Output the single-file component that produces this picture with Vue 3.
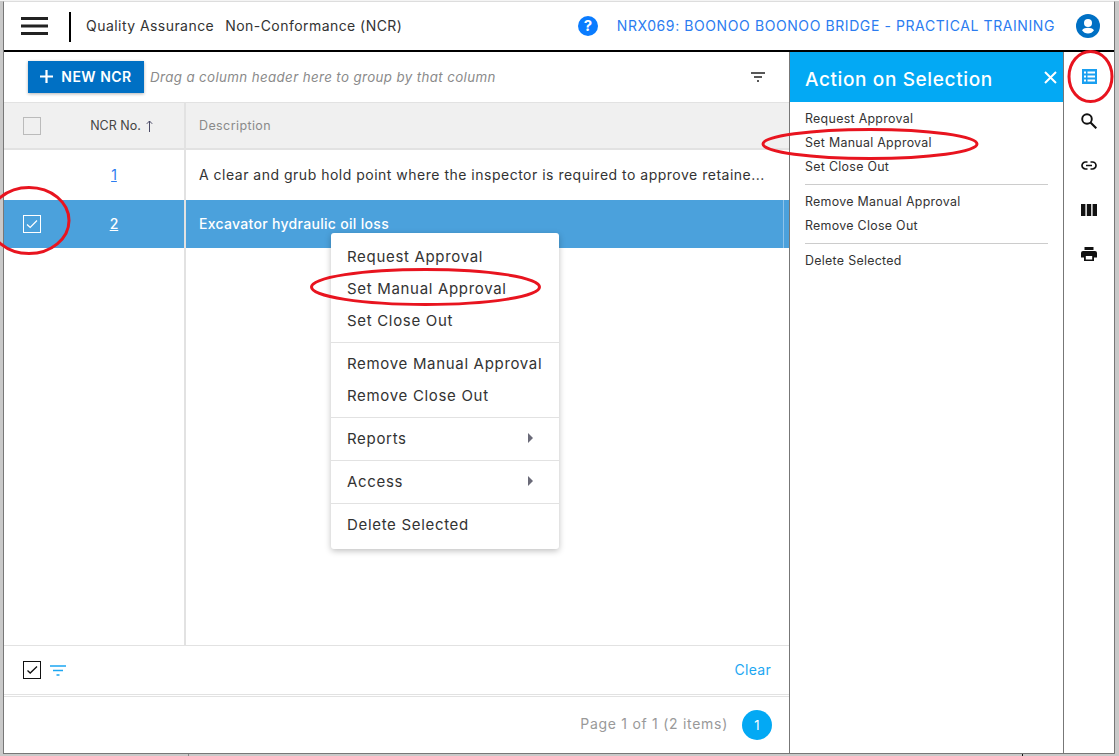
<template>
	<div class="screen">
		<div class="window">
			<header class="topbar">
				<svg class="burger" width="27" height="18" viewBox="0 0 27 18">
					<rect y="0" width="27" height="3" fill="#222" />
					<rect y="7.500" width="27" height="3" fill="#222" />
					<rect y="15" width="27" height="3" fill="#222" />
				</svg>
				<span class="bar-divider"></span>
				<span class="crumb">Quality Assurance</span>
				<span class="crumb">Non-Conformance (NCR)</span>
				<span class="spacer"></span>
				<svg class="help" width="20" height="20" viewBox="0 0 20 20">
					<circle cx="10" cy="10" r="10" fill="#0a7cff" />
					<text x="10" y="15" text-anchor="middle" class="help-mark">?</text>
				</svg>
				<span class="project">NRX069: BOONOO BOONOO BRIDGE - PRACTICAL TRAINING</span>
				<svg class="avatar" width="24" height="24" viewBox="0 0 24 24">
					<circle cx="12" cy="12" r="12" fill="#0070c4" />
					<circle cx="12" cy="9" r="4" fill="#fff" />
					<path d="M6 16.200c1.300-1.700 3.700-2.400 6-2.400s4.700.7 6 2.400c-1.300 2-3.500 3.300-6 3.300s-4.700-1.300-6-3.300z" fill="#fff" />
				</svg>
			</header>

			<div class="body">
				<main class="grid-area">
					<div class="group-bar">
						<button class="new-btn">
							<svg width="13" height="13" viewBox="0 0 13 13">
								<path d="M6.500 0v13M0 6.500h13" stroke="#fff" stroke-width="2.200" />
							</svg>
							NEW NCR
						</button>
						<span class="group-hint">Drag a column header here to group by that column</span>
						<svg class="sort-icon" width="14" height="10" viewBox="0 0 14 10">
							<path d="M0 1h14M3 5h8M6 9h2" stroke="#222" stroke-width="1.500" />
						</svg>
					</div>

					<div class="grid">
						<div class="row head">
							<div class="cell-no">
								<span class="check"></span>
								<span class="no-label">NCR No.
									<svg class="arrow" width="7" height="12" viewBox="0 0 7 12">
										<path d="M3.500 12V1M.8 3.800L3.500 1l2.700 2.800" fill="none" stroke="#4a4a66" stroke-width="1" />
									</svg>
								</span>
							</div>
							<div class="cell-desc">Description</div>
						</div>
						<div v-for="row in rows" :key="row.no" class="row" :class="{ selected: row.selected }">
							<div class="cell-no">
								<span v-if="row.selected" class="check on">
									<svg width="14" height="14" viewBox="0 0 14 14">
										<path d="M2 7.500l3.200 3L12 3.500" fill="none" stroke="#fff" stroke-width="1.200" />
									</svg>
								</span>
								<a class="no-link">{{ row.no }}</a>
							</div>
							<div class="cell-desc body-text">{{ row.text }}</div>
							<span v-if="row.selected" class="row-stripe"></span>
						</div>
						<div class="row filler">
							<div class="cell-no"></div>
							<div class="cell-desc"></div>
						</div>
					</div>

					<div class="filter-bar">
						<span class="check dark">
							<svg width="14" height="14" viewBox="0 0 14 14">
								<path d="M2.500 7.500l2.700 2.500L12 3.500" fill="none" stroke="#111" stroke-width="1.300" />
							</svg>
						</span>
						<svg width="16" height="11" viewBox="0 0 16 11">
							<path d="M0 1h16M3 5.500h10M6.500 10h3" stroke="#1da7f2" stroke-width="1.500" />
						</svg>
						<span class="spacer"></span>
						<a class="clear">Clear</a>
					</div>

					<div class="pager">
						<span class="page-info">Page 1 of 1 (2 items)</span>
						<span class="page-dot">1</span>
					</div>
				</main>

				<aside class="panel">
					<div class="panel-head">
						<span class="panel-title">Action on Selection</span>
						<svg width="13" height="13" viewBox="0 0 13 13">
							<path d="M1 1l11 11M12 1L1 12" stroke="#fff" stroke-width="2" />
						</svg>
					</div>
					<div class="panel-list">
						<template v-for="(group, i) in panelGroups" :key="i">
							<hr v-if="i > 0" />
							<div v-for="item in group" :key="item" class="panel-item">{{ item }}</div>
						</template>
					</div>
				</aside>

				<nav class="rail">
					<span class="rail-slot">
						<svg width="15" height="15" viewBox="0 0 15 15">
							<rect width="15" height="15" fill="#1a9ff0" />
							<path d="M2 3.500h2M5.500 3.500h7.500M2 7.500h2M5.500 7.500h7.500M2 11.500h2M5.500 11.500h7.500" stroke="#fff" stroke-width="1.800" />
						</svg>
					</span>
					<span class="rail-slot">
						<svg width="16" height="16" viewBox="0 0 16 16">
							<circle cx="6" cy="6" r="4.800" fill="none" stroke="#111" stroke-width="1.900" />
							<path d="M9.500 9.500L15.300 15.300" stroke="#111" stroke-width="2.100" />
						</svg>
					</span>
					<span class="rail-slot">
						<svg width="16" height="9" viewBox="0 0 16 9">
							<path d="M6.500 1H4.500a3.500 3.500 0 0 0 0 7h2M9.500 1h2a3.500 3.500 0 0 1 0 7h-2M5 4.500h6" fill="none" stroke="#111" stroke-width="1.700" />
						</svg>
					</span>
					<span class="rail-slot">
						<svg width="16" height="12" viewBox="0 0 16 12">
							<path d="M0 0h4.400v12H0zM5.800 0h4.400v12H5.800zM11.600 0H16v12h-4.400z" fill="#111" />
						</svg>
					</span>
					<span class="rail-slot">
						<svg width="16" height="14" viewBox="0 0 16 14">
							<path d="M3.500 0h9v3h-9z" fill="#111" />
							<path d="M2 4h12a2 2 0 0 1 2 2v4.500h-3V14H3v-3.500H0V6a2 2 0 0 1 2-2z" fill="#111" />
							<path d="M4.800 9h6.400v3.500H4.800z" fill="#fff" />
						</svg>
					</span>
				</nav>

				<div class="context-menu">
					<template v-for="(group, i) in menuGroups" :key="i">
						<hr v-if="i > 0" />
						<div v-for="item in group" :key="item.label" class="menu-item">
							<span>{{ item.label }}</span>
							<i v-if="item.sub" class="caret"></i>
						</div>
					</template>
				</div>
			</div>
		</div>

		<svg class="marks" width="1119" height="756" viewBox="0 0 1119 756">
			<g fill="none" stroke="#e8141f" stroke-width="3">
				<ellipse cx="29" cy="220.500" rx="40" ry="33" />
				<ellipse cx="425.500" cy="287" rx="114" ry="17.500" />
				<ellipse cx="870" cy="144" rx="107" ry="14.500" />
				<ellipse cx="1090.500" cy="76.500" rx="21.500" ry="25" />
			</g>
			<path d="M1022.500 754v2" stroke="#111" />
			<path d="M188.500 754v2" stroke="#888" />
		</svg>
	</div>
</template>

<script setup>
	const rows = [{
		no: 1,
		text: 'A clear and grub hold point where the inspector is required to approve retaine...',
		selected: false
	}, {
		no: 2,
		text: 'Excavator hydraulic oil loss',
		selected: true
	}]
	const panelGroups = [
		['Request Approval', 'Set Manual Approval', 'Set Close Out'],
		['Remove Manual Approval', 'Remove Close Out'],
		['Delete Selected']
	]
	const menuGroups = [
		[{ label: 'Request Approval' }, { label: 'Set Manual Approval' }, { label: 'Set Close Out' }],
		[{ label: 'Remove Manual Approval' }, { label: 'Remove Close Out' }],
		[{ label: 'Reports', sub: true }],
		[{ label: 'Access', sub: true }],
		[{ label: 'Delete Selected' }]
	]
</script>

<style>
	html,
	body {
		margin: 0;
		background: #ccc;
	}
</style>

<style scoped>
	.screen {
		position: relative;
		width: 1119px;
		height: 756px;
		overflow: hidden;
		padding: 0 4px 2px 3px;
		box-sizing: border-box;
		background: #c9c9c9;
		border-top: 1px solid #f4f4f4;
		font-family: Inter, "Open Sans", "Liberation Sans", sans-serif;
		color: #2b2b33;
	}

	.window {
		position: relative;
		height: 100%;
		box-sizing: border-box;
		display: flex;
		flex-direction: column;
		background: #fff;
		border-left: 1px solid #777;
		border-bottom: 1px solid #777;
		border-right: 1px solid #777;
		border-top: 1px solid #ddd;
	}

	.topbar {
		height: 50px;
		display: flex;
		align-items: center;
		border-bottom: 2px solid #000;
		box-sizing: border-box;
		flex: none;
		font-size: 14px;
	}

	.burger {
		margin-left: 17px;
	}

	.bar-divider {
		width: 2px;
		height: 30px;
		background: #000;
		margin: 2px 15px 0 21px;
	}

	.crumb {
		margin: 0 11px 2px 0;
		letter-spacing: .45px;
		color: #333;
	}

	.spacer {
		flex: 1;
	}

	.help {
		margin-right: 19px;
	}

	.help-mark {
		fill: #fff;
		font-size: 15px;
		font-weight: 700;
	}

	.project {
		color: #2b7cf0;
		letter-spacing: .59px;
		margin: 0 21px 2px 0;
	}

	.avatar {
		margin-right: 14px;
	}

	.body {
		position: relative;
		flex: 1;
		display: flex;
		min-height: 0;
	}

	.grid-area {
		width: 786px;
		flex: none;
		display: flex;
		flex-direction: column;
		border-right: 1px solid #777;
		box-sizing: border-box;
	}

	.group-bar {
		height: 51px;
		flex: none;
		display: flex;
		align-items: center;
		padding: 0 24px 1px;
		box-sizing: border-box;
		border-bottom: 1px solid #e2e2e2;
	}

	.new-btn {
		width: 116px;
		height: 32px;
		border: 0;
		padding: 0;
		display: flex;
		align-items: center;
		justify-content: center;
		gap: 8px;
		background: #0070c4;
		color: #fff;
		font: 600 14px Inter, sans-serif;
		letter-spacing: .5px;
		box-shadow: 0 1px 3px rgba(0, 0, 0, .3);
	}

	.group-hint {
		flex: 1;
		margin-left: 6px;
		font-size: 13.300px;
		font-style: italic;
		color: #8a8a8a;
		letter-spacing: .39px;
	}

	.grid {
		flex: 1;
		display: flex;
		flex-direction: column;
		min-height: 0;
	}

	.row {
		position: relative;
		height: 50px;
		flex: none;
		display: flex;
		font-size: 14px;
		box-sizing: border-box;
	}

	.head {
		height: 47px;
		background: #f0f0f0;
		border-bottom: 2px solid #e2e2e2;
		font-size: 12.500px;
	}

	.filler {
		flex: 1;
		height: auto;
		min-height: 0;
	}

	.cell-no {
		position: relative;
		width: 182px;
		flex: none;
		display: flex;
		align-items: center;
		justify-content: center;
		padding-left: 40px;
		box-sizing: border-box;
		border-right: 2px solid #e2e2e2;
	}

	.head .cell-no {
		padding-left: 55px;
	}

	.cell-desc {
		flex: 1;
		display: flex;
		align-items: center;
		padding-left: 13px;
		letter-spacing: .5px;
		color: #333;
		white-space: nowrap;
		overflow: hidden;
	}

	.body-text {
		padding-bottom: 2px;
	}

	.head .cell-desc {
		color: #8a8a8a;
		letter-spacing: .4px;
	}

	.no-label {
		display: flex;
		align-items: center;
		gap: 5px;
		color: #444;
		white-space: nowrap;
	}

	.check {
		position: absolute;
		left: 19px;
		top: 50%;
		margin-top: -9px;
		width: 18px;
		height: 18px;
		box-sizing: border-box;
		border: 1px solid #bbb;
		display: flex;
		align-items: center;
		justify-content: center;
	}

	.check.on {
		border-color: #fff;
	}

	.check.dark {
		position: static;
		margin: 0 9px 0 0;
		border-color: #111;
	}

	.no-link {
		color: #2b7cf0;
		text-decoration: underline;
		margin-bottom: 2px;
	}

	.selected {
		background: #4ba1dc;
		color: #fff;
		height: 48px;
		font-weight: 500;
	}

	.selected .cell-desc {
		color: #fff;
		letter-spacing: .3px;
	}

	.selected .no-link {
		color: #fff;
	}

	.row-stripe {
		position: absolute;
		right: 5px;
		top: 0;
		bottom: 0;
		width: 1px;
		background: #8ec3ea;
	}

	.filter-bar {
		height: 50px;
		flex: none;
		display: flex;
		align-items: center;
		padding: 0 18px 0 19px;
		box-sizing: border-box;
		border-top: 1px solid #e2e2e2;
		border-bottom: 1px solid #e2e2e2;
	}

	.clear {
		color: #1da7f2;
		font-size: 14px;
		letter-spacing: .3px;
		margin-bottom: 2px;
	}

	.pager {
		height: 57px;
		flex: none;
		margin-top: 1px;
		display: flex;
		align-items: center;
		justify-content: flex-end;
		gap: 14px;
		padding-right: 17px;
		box-sizing: border-box;
		border-top: 1px solid #e2e2e2;
	}

	.page-info {
		color: #999;
		font-size: 14px;
		letter-spacing: .72px;
		margin-bottom: 3px;
	}

	.page-dot {
		width: 30px;
		height: 30px;
		border-radius: 50%;
		background: #03a9f4;
		color: #fff;
		font-size: 13px;
		display: flex;
		align-items: center;
		justify-content: center;
	}

	.panel {
		width: 274px;
		flex: none;
		border-right: 1px solid #777;
		box-sizing: border-box;
	}

	.panel-head {
		height: 50px;
		background: #03a9f4;
		color: #fff;
		display: flex;
		align-items: center;
		justify-content: space-between;
		padding: 1px 6px 0 15px;
		box-sizing: border-box;
	}

	.panel-title {
		font-size: 19px;
		font-weight: 500;
		letter-spacing: .62px;
		padding-top: 3px;
	}

	.panel-list {
		padding: 5px 15px;
	}

	.panel-list hr {
		border: 0;
		border-top: 1px solid #ccc;
		margin: 5px 0 5px;
	}

	.panel-item {
		height: 24px;
		line-height: 24px;
		font-size: 12.400px;
		letter-spacing: .3px;
		color: #333;
		white-space: nowrap;
	}

	.rail {
		flex: 1;
		display: flex;
		flex-direction: column;
		align-items: center;
		padding-top: 2px;
		box-sizing: border-box;
	}

	.rail-slot {
		height: 44.500px;
		flex: none;
		display: flex;
		align-items: center;
	}

	.context-menu {
		position: absolute;
		left: 327px;
		top: 181px;
		width: 228px;
		height: 316px;
		box-sizing: border-box;
		background: #fff;
		border-radius: 3px;
		box-shadow: 0 2px 6px rgba(0, 0, 0, .25);
		padding: 8px 0;
	}

	.context-menu hr {
		border: 0;
		border-top: 1px solid #e2e2e2;
		margin: 5px 0;
	}

	.menu-item {
		height: 32px;
		display: flex;
		align-items: center;
		justify-content: space-between;
		padding: 0 26px 2px 16px;
		box-sizing: border-box;
		font-size: 15px;
		letter-spacing: .68px;
		color: #333;
		white-space: nowrap;
	}

	.caret {
		width: 0;
		height: 0;
		border-left: 5.500px solid #6a6a78;
		border-top: 5px solid transparent;
		border-bottom: 5px solid transparent;
	}

	.marks {
		position: absolute;
		left: 0;
		top: -1px;
		pointer-events: none;
	}
</style>
